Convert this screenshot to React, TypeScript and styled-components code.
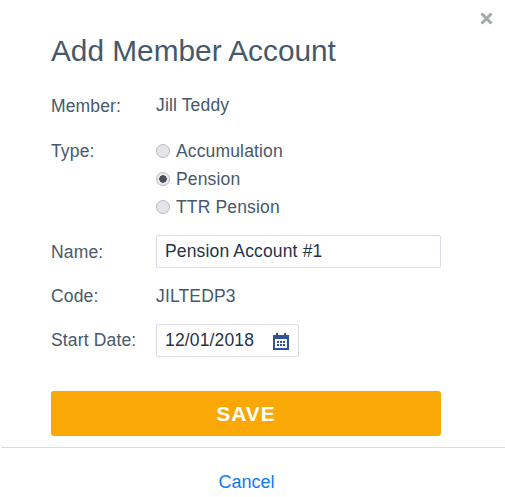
import styled, { createGlobalStyle } from "styled-components";

const GlobalStyle = createGlobalStyle`
  html, body {
    margin: 0;
    padding: 0;
    background: #fff;
    font-family: "Liberation Sans", Arial, sans-serif;
  }
`;

const Modal = styled.div`
  width: 505px;
  height: 497px;
  overflow: hidden;
  display: flex;
  flex-direction: column;
  position: relative;
  color: #46596b;
`;

const Close = styled.button`
  position: absolute;
  top: 10px;
  right: 11px;
  width: 15px;
  height: 15px;
  padding: 0;
  border: 0;
  background: none;
  display: flex;
`;

const Body = styled.div`
  padding: 34px 64px 0 51px;
  display: flex;
  flex-direction: column;
`;

const Title = styled.h2`
  margin: 0 0 27px;
  font-size: 29.8px;
  line-height: 34px;
  font-weight: 400;
  color: #46596b;
`;

const Row = styled.div<{ $gap: number }>`
  display: flex;
  align-items: flex-start;
  margin-bottom: ${(p) => p.$gap}px;
`;

const Label = styled.label<{ $top?: number }>`
  width: 105px;
  flex: none;
  font-size: 17.5px;
  line-height: 20px;
  letter-spacing: 0.15px;
  padding-top: ${(p) => p.$top ?? 0}px;
`;

const Value = styled.div`
  font-size: 17.5px;
  line-height: 20px;
  letter-spacing: 0.15px;
`;

const RadioList = styled.div`
  display: flex;
  flex-direction: column;
  gap: 8px;
`;

const RadioRow = styled.label`
  display: flex;
  align-items: center;
  gap: 6px;
  font-size: 17.5px;
  line-height: 20px;
  letter-spacing: 0.15px;
`;

const Radio = styled.input`
  appearance: none;
  width: 14px;
  height: 14px;
  margin: 0;
  border: 1px solid #b9b9bd;
  border-radius: 50%;
  background: #e6e4ea;
  position: relative;

  &:checked {
    background: radial-gradient(circle, #4a4f58 0 3.5px, #ebebee 4px);
  }
`;

const Field = styled.div<{ $width: number }>`
  box-sizing: border-box;
  width: ${(p) => p.$width}px;
  height: 33px;
  border: 1px solid #dcdce8;
  border-radius: 2px;
  display: flex;
  align-items: center;
  padding: 0 9px 0 8px;
`;

const FieldInput = styled.input`
  flex: 1;
  min-width: 0;
  border: 0;
  outline: 0;
  padding: 0;
  background: none;
  font-family: inherit;
  font-size: 17.5px;
  letter-spacing: 0.15px;
  color: #1f3349;
`;

const Save = styled.button`
  height: 45px;
  width: 390px;
  border: 0;
  border-radius: 3px;
  background: #f9a806;
  color: #fff;
  font-family: inherit;
  font-size: 21px;
  font-weight: 700;
  letter-spacing: 1px;
  margin-top: 34px;
`;

const Footer = styled.div`
  margin-top: 11px;
  border-top: 1px solid #dcdae2;
  margin-left: 1px;
  display: flex;
  justify-content: center;
  padding-top: 24px;
  padding-right: 13px;
`;

const Cancel = styled.a`
  color: #0a7bf2;
  font-size: 18px;
  line-height: 20px;
`;

const CloseIcon = () => (
  <svg width="15" height="15" viewBox="0 0 15 15">
    <path d="M2.5 3.5 12.5 13.5M12.5 3.5 2.5 13.5" stroke="#a3a8a8" strokeWidth="3" />
  </svg>
);

const CalendarIcon = () => (
  <svg width="16" height="18" viewBox="0 0 16 18">
    <path fill="#2f5597" d="M0 3h3V1h2v2h6V1h2v2h3v15H0zM2 7v9h12V7z" />
    <path fill="#2f5597" d="M4 9h2v2H4zM7 9h2v2H7zM10 9h2v2h-2zM4 12h2v2H4zM7 12h2v2H7zM10 12h2v2h-2z" />
  </svg>
);

const App = () => {
  return (
    <Modal>
      <GlobalStyle />
      <Close aria-label="Close">
        <CloseIcon />
      </Close>
      <Body>
        <Title>Add Member Account</Title>
        <Row $gap={25}>
          <Label $top={1}>Member:</Label>
          <Value>Jill Teddy</Value>
        </Row>
        <Row $gap={18}>
          <Label>Type:</Label>
          <RadioList>
            <RadioRow>
              <Radio type="radio" name="type" />
              Accumulation
            </RadioRow>
            <RadioRow>
              <Radio type="radio" name="type" defaultChecked />
              Pension
            </RadioRow>
            <RadioRow>
              <Radio type="radio" name="type" />
              TTR Pension
            </RadioRow>
          </RadioList>
        </Row>
        <Row $gap={18}>
          <Label $top={7}>Name:</Label>
          <Field $width={285}>
            <FieldInput defaultValue="Pension Account #1" />
          </Field>
        </Row>
        <Row $gap={18}>
          <Label>Code:</Label>
          <Value>JILTEDP3</Value>
        </Row>
        <Row $gap={0}>
          <Label $top={6}>Start Date:</Label>
          <Field $width={143}>
            <FieldInput defaultValue="12/01/2018" />
            <CalendarIcon />
          </Field>
        </Row>
        <Save>SAVE</Save>
      </Body>
      <Footer>
        <Cancel>Cancel</Cancel>
      </Footer>
    </Modal>
  );
};

export default App;
